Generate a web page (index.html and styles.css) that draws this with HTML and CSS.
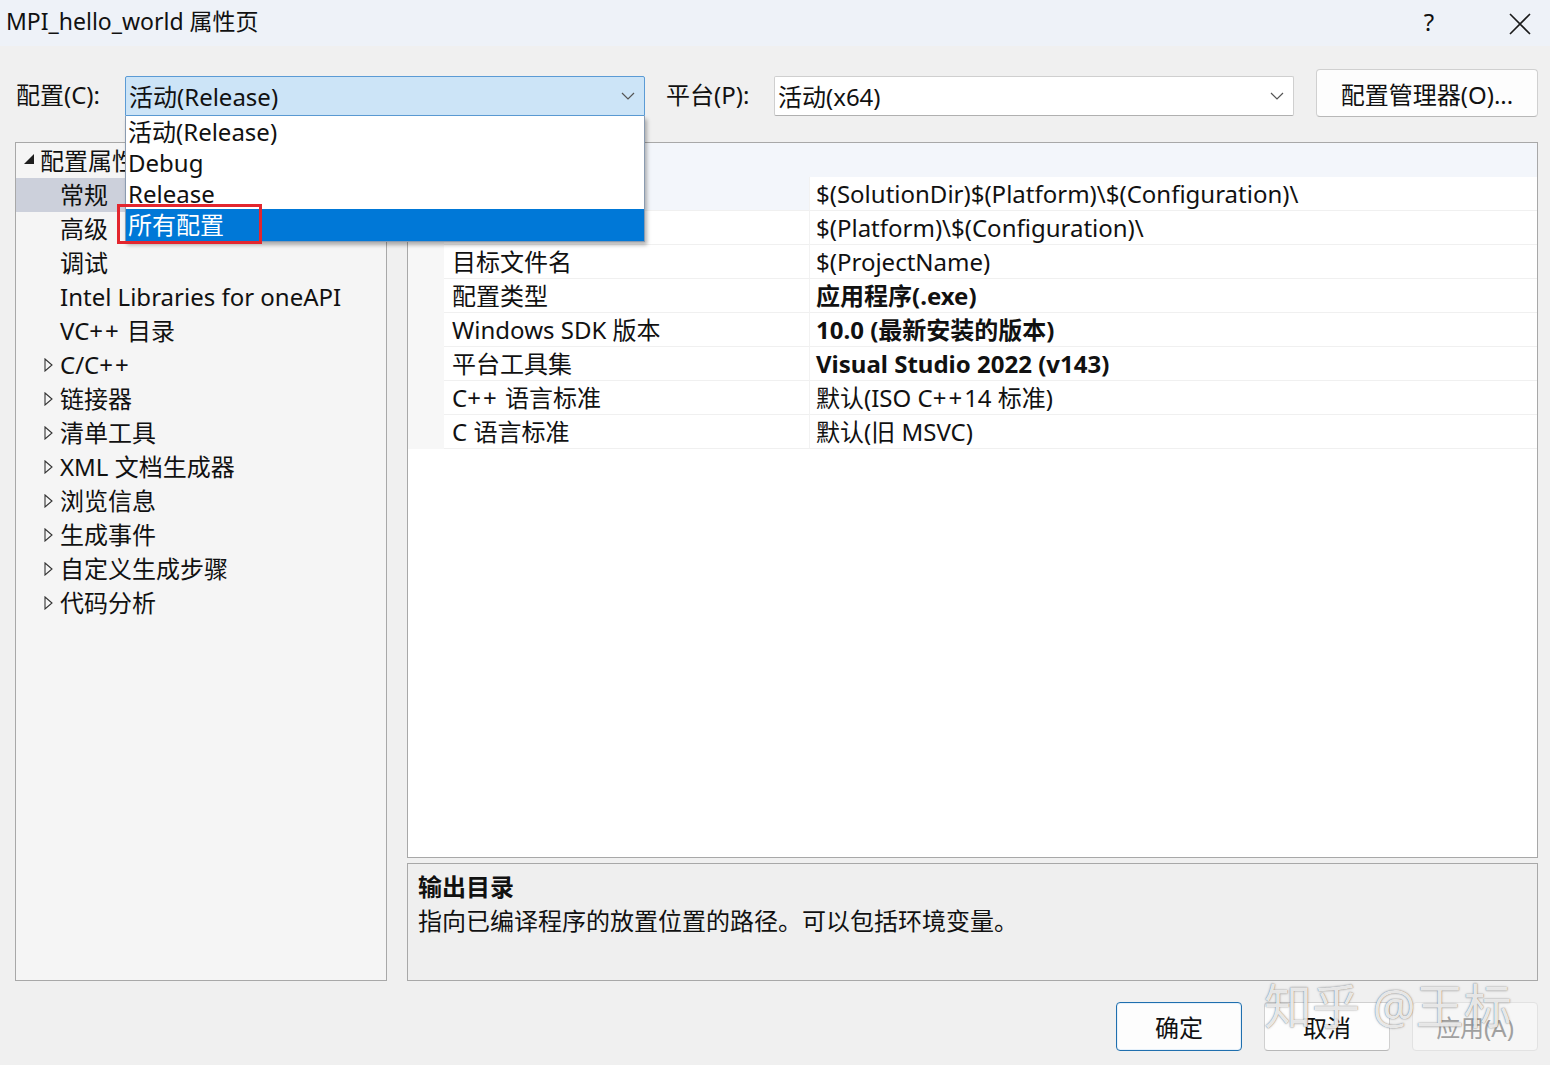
FILE: index.html
```html
<!DOCTYPE html>
<html lang="zh-CN">
<head>
    <meta charset="UTF-8">
    <title>MPI_hello_world 属性页</title>
    <link rel="stylesheet" href="styles.css">
</head>
<body>
    <div class="titlebar">
        <span class="title">MPI_hello_world 属性页</span>
        <span class="help">?</span>
        <span class="close">
            <svg width="22" height="22" viewBox="0 0 22 22"><path d="M1 1L21 21M21 1L1 21" stroke="#1a1a1a" stroke-width="1.6" fill="none"/></svg>
        </span>
    </div>

    <div class="toolbar">
        <label class="lbl">配置(C):</label>
        <div class="combo combo-active">
            <span>活动(Release)</span>
            <svg class="chev" width="14" height="8" viewBox="0 0 14 8"><path d="M1 1L7 7L13 1" stroke="#555" stroke-width="1.2" fill="none"/></svg>
        </div>
        <label class="lbl lbl2">平台(P):</label>
        <div class="combo">
            <span>活动(x64)</span>
            <svg class="chev" width="14" height="8" viewBox="0 0 14 8"><path d="M1 1L7 7L13 1" stroke="#555" stroke-width="1.2" fill="none"/></svg>
        </div>
        <button class="btn btn-mgr">配置管理器(O)...</button>
    </div>

    <div class="main">
        <div class="tree">
            <div class="node top">
                <span class="tw"><svg width="11" height="11" viewBox="0 0 11 11"><polygon points="10,0 10,10 0,10" fill="#1e1e1e"/></svg></span><span>配置属性</span>
            </div>
            <div class="node sub selected"><span class="tw"></span><span>常规</span></div>
            <div class="node sub"><span class="tw"></span><span>高级</span></div>
            <div class="node sub"><span class="tw"></span><span>调试</span></div>
            <div class="node sub"><span class="tw"></span><span>Intel Libraries for oneAPI</span></div>
            <div class="node sub"><span class="tw"></span><span>VC<span class="pp">++</span> 目录</span></div>
            <div class="node sub"><span class="tw"><svg width="9" height="14" viewBox="0 0 9 14"><polygon points="1,1 8,7 1,13" fill="none" stroke="#333" stroke-width="1.1"/></svg></span><span>C/C<span class="pp">++</span></span></div>
            <div class="node sub"><span class="tw"><svg width="9" height="14" viewBox="0 0 9 14"><polygon points="1,1 8,7 1,13" fill="none" stroke="#333" stroke-width="1.1"/></svg></span><span>链接器</span></div>
            <div class="node sub"><span class="tw"><svg width="9" height="14" viewBox="0 0 9 14"><polygon points="1,1 8,7 1,13" fill="none" stroke="#333" stroke-width="1.1"/></svg></span><span>清单工具</span></div>
            <div class="node sub"><span class="tw"><svg width="9" height="14" viewBox="0 0 9 14"><polygon points="1,1 8,7 1,13" fill="none" stroke="#333" stroke-width="1.1"/></svg></span><span>XML 文档生成器</span></div>
            <div class="node sub"><span class="tw"><svg width="9" height="14" viewBox="0 0 9 14"><polygon points="1,1 8,7 1,13" fill="none" stroke="#333" stroke-width="1.1"/></svg></span><span>浏览信息</span></div>
            <div class="node sub"><span class="tw"><svg width="9" height="14" viewBox="0 0 9 14"><polygon points="1,1 8,7 1,13" fill="none" stroke="#333" stroke-width="1.1"/></svg></span><span>生成事件</span></div>
            <div class="node sub"><span class="tw"><svg width="9" height="14" viewBox="0 0 9 14"><polygon points="1,1 8,7 1,13" fill="none" stroke="#333" stroke-width="1.1"/></svg></span><span>自定义生成步骤</span></div>
            <div class="node sub"><span class="tw"><svg width="9" height="14" viewBox="0 0 9 14"><polygon points="1,1 8,7 1,13" fill="none" stroke="#333" stroke-width="1.1"/></svg></span><span>代码分析</span></div>
        </div>

        <div class="right">
            <div class="grid">
                <div class="cat">常规</div>
                <div class="row">
                    <div class="gutter"></div>
                    <div class="name cur">输出目录</div>
                    <div class="val">$(SolutionDir)$(Platform)\$(Configuration)\</div>
                </div>
                <div class="row">
                    <div class="gutter"></div>
                    <div class="name">中间目录</div>
                    <div class="val">$(Platform)\$(Configuration)\</div>
                </div>
                <div class="row">
                    <div class="gutter"></div>
                    <div class="name">目标文件名</div>
                    <div class="val">$(ProjectName)</div>
                </div>
                <div class="row">
                    <div class="gutter"></div>
                    <div class="name">配置类型</div>
                    <div class="val bold">应用程序(.exe)</div>
                </div>
                <div class="row">
                    <div class="gutter"></div>
                    <div class="name">Windows SDK 版本</div>
                    <div class="val bold">10.0 (最新安装的版本)</div>
                </div>
                <div class="row">
                    <div class="gutter"></div>
                    <div class="name">平台工具集</div>
                    <div class="val bold">Visual Studio 2022 (v143)</div>
                </div>
                <div class="row">
                    <div class="gutter"></div>
                    <div class="name">C<span class="pp">++</span> 语言标准</div>
                    <div class="val">默认(ISO C<span class="pp">++</span>14 标准)</div>
                </div>
                <div class="row">
                    <div class="gutter"></div>
                    <div class="name">C 语言标准</div>
                    <div class="val">默认(旧 MSVC)</div>
                </div>
            </div>
            <div class="desc">
                <div class="desc-title">输出目录</div>
                <div class="desc-text">指向已编译程序的放置位置的路径。可以包括环境变量。</div>
            </div>
        </div>
    </div>

    <div class="footer">
        <button class="btn btn-ok">确定</button>
        <button class="btn">取消</button>
        <button class="btn btn-off">应用(A)</button>
    </div>

    <div class="droplist">
        <div class="item">活动(Release)</div>
        <div class="item">Debug</div>
        <div class="item">Release</div>
        <div class="item picked">所有配置</div>
    </div>
    <div class="redbox"></div>

    <div class="watermark">知乎 @王标</div>
</body>
</html>
```

FILE: styles.css
```css
body{
    margin: 0;
    width: 1550px;
    height: 1065px;
    overflow: hidden;
    position: relative;
    background: #f0f0f0;
    color: #111;
    font-family: "Noto Sans", "Noto Sans CJK SC", sans-serif;
    font-size: 24px;
}

.titlebar{
    height: 46px;
    background: #eef2f8;
    display: flex;
    align-items: center;
}
.title{
    padding-left: 6px;
    font-size: 23px;
    line-height: 40px;
    margin-top: -4px;
}
.help{
    margin-left: auto;
    width: 20px;
    text-align: center;
    margin-right: 70px;
    margin-top: -4px;
}
.close{
    width: 22px;
    height: 22px;
    margin-right: 19px;
    margin-top: -6px;
}

.toolbar{
    display: flex;
    align-items: flex-start;
    padding: 23px 0 0 16px;
    height: 48px;
}
.lbl{
    width: 109px;
    margin-top: 6px;
    line-height: 40px;
}
.lbl2{
    margin-left: 21px;
    width: 108px;
}
.combo{
    box-sizing: border-box;
    width: 520px;
    height: 40px;
    margin-top: 7px;
    background: #fff;
    border: 1px solid #cfcfcf;
    border-bottom-color: #b0b0b0;
    border-radius: 2px;
    display: flex;
    align-items: center;
    padding-left: 3px;
    padding-right: 9px;
}
.combo span{
    flex: 1;
    margin-top: -2px;
}
.combo-active{
    background: #cce4f7;
    border-color: #5b9bd5;
    border-radius: 2px 2px 0 0;
}
.btn{
    box-sizing: border-box;
    font-family: inherit;
    font-size: 24px;
    color: #111;
    background: #fdfdfd;
    border: 1px solid #d0d0d0;
    border-bottom-color: #b8b8b8;
    border-radius: 4px;
    padding: 0;
}
.btn-mgr{
    margin-left: 22px;
    width: 222px;
    height: 48px;
}
.pp{
    letter-spacing: 2px;
}

.main{
    display: flex;
    margin: 25px 0 0 15px;
    height: 839px;
}
.tree{
    box-sizing: border-box;
    width: 372px;
    background: #f5f5f5;
    border: 1px solid #a8a8a8;
    padding-top: 1px;
}
.node{
    height: 34px;
    line-height: 34px;
    display: flex;
    align-items: center;
    white-space: nowrap;
}
.tw{
    display: flex;
    align-items: center;
    width: 16px;
    height: 34px;
}
.top{
    padding-left: 8px;
}
.top .tw svg{
    margin-top: -4px;
}
.sub{
    padding-left: 28px;
}
.selected{
    background: #ccd0db;
}

.right{
    margin-left: 20px;
    width: 1131px;
    display: flex;
    flex-direction: column;
}
.grid{
    box-sizing: border-box;
    height: 716px;
    background: #fff;
    border: 1px solid #a8a8a8;
}
.cat{
    height: 34px;
    line-height: 34px;
    background: #f3f6fb;
    padding-left: 37px;
}
.row{
    display: flex;
    height: 34px;
    line-height: 33px;
}
.gutter{
    width: 36px;
    background: #f7f7f7;
}
.name{
    box-sizing: border-box;
    width: 365px;
    padding-left: 8px;
    border-bottom: 1px solid #f0f0f0;
    white-space: nowrap;
}
.cur{
    background: #f3f6fb;
}
.val{
    flex: 1;
    padding-left: 6px;
    border-left: 1px solid #f2f2f2;
    border-bottom: 1px solid #f0f0f0;
    white-space: nowrap;
}
.bold{
    font-weight: bold;
}

.desc{
    box-sizing: border-box;
    margin-top: 5px;
    flex: 1;
    background: #efefef;
    border: 1px solid #a8a8a8;
    padding: 6px 0 0 10px;
}
.desc-title{
    font-weight: bold;
    line-height: 34px;
}
.desc-text{
    line-height: 34px;
}

.footer{
    display: flex;
    justify-content: flex-end;
    gap: 22px;
    margin-top: 21px;
    padding-right: 12px;
}
.footer .btn{
    width: 126px;
    height: 49px;
}
.btn-ok{
    border: 1px solid #1f6fae;
    box-shadow: inset 0 0 0 1px #e6f1fb;
}
.btn-off{
    color: #a0a0a0;
    background: #f6f6f6;
    border-color: #e2e2e2;
}

.droplist{
    position: absolute;
    left: 125px;
    top: 116px;
    width: 520px;
    box-sizing: border-box;
    background: #fff;
    border: 1px solid #8a9bb0;
    border-top: none;
    box-shadow: 2px 3px 4px rgba(0,0,0,0.3);
}
.item{
    height: 31px;
    line-height: 31px;
    padding-left: 2px;
}
.picked{
    background: #0078d7;
    color: #fff;
    height: 32px;
}
.redbox{
    position: absolute;
    left: 117px;
    top: 204px;
    width: 145px;
    height: 40px;
    box-sizing: border-box;
    border: 3px solid #e3262e;
}

.watermark{
    position: absolute;
    left: 1264px;
    top: 968px;
    font-size: 48px;
    color: rgba(250,250,250,0.9);
    text-shadow: 0 0 1px rgba(0,0,0,0.55), 0 0 3px rgba(0,0,0,0.2);
    white-space: nowrap;
    pointer-events: none;
}
```
